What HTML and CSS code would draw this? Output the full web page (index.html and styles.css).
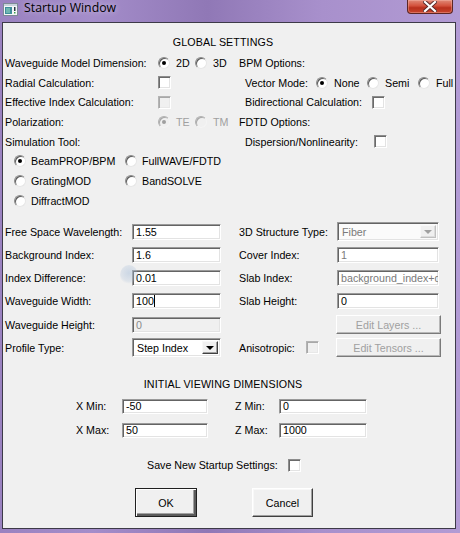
FILE: index.html
```html
<!DOCTYPE html>
<html>
<head>
<meta charset="utf-8">
<title>Startup Window</title>
<link rel="stylesheet" href="styles.css">
</head>
<body>
<div class="window">
  <div class="titlebar">
    <svg class="app-icon" width="15" height="13" viewBox="0 0 15 13">
      <rect x="0.5" y="0.5" width="14" height="12" fill="#f4f6f8" stroke="#7d8a96"/>
      <rect x="1" y="1" width="13" height="2" fill="#c9d3dc"/>
      <rect x="2" y="4" width="7" height="7" fill="#3f8f9c"/>
      <rect x="3" y="5" width="4" height="5" fill="#6fb6b0"/>
      <rect x="11" y="4" width="1.5" height="4" fill="#2c3a44"/>
      <rect x="11" y="9" width="1.5" height="1.5" fill="#3aa04a"/>
    </svg>
    <span class="title">Startup Window</span>
    <div class="close">
      <svg width="14" height="11" viewBox="0 0 14 11">
        <path d="M2 1 L12 10 M12 1 L2 10" stroke="#5a2a2a" stroke-width="4" stroke-linecap="square"/>
        <path d="M2 1 L12 10 M12 1 L2 10" stroke="#ffffff" stroke-width="2.2" stroke-linecap="square"/>
      </svg>
    </div>
  </div>

  <div class="client">
    <div class="heading">GLOBAL SETTINGS</div>

    <div class="global">
      <div class="gleft">
        <div class="row"><span class="lbl w153">Waveguide Model Dimension:</span><span class="opt w37"><i class="radio on"></i>2D</span><span class="opt"><i class="radio"></i>3D</span></div>
        <div class="row"><span class="lbl w153">Radial Calculation:</span><i class="check"></i></div>
        <div class="row"><span class="lbl w153">Effective Index Calculation:</span><i class="check dis"></i></div>
        <div class="row"><span class="lbl w153">Polarization:</span><span class="opt w37 gray"><i class="radio on dis"></i>TE</span><span class="opt gray"><i class="radio dis"></i>TM</span></div>
        <div class="row"><span class="lbl">Simulation Tool:</span></div>
        <div class="row sim"><span class="opt w111"><i class="radio on"></i>BeamPROP/BPM</span><span class="opt"><i class="radio"></i>FullWAVE/FDTD</span></div>
        <div class="row sim"><span class="opt w111"><i class="radio"></i>GratingMOD</span><span class="opt"><i class="radio"></i>BandSOLVE</span></div>
        <div class="row sim"><span class="opt w111"><i class="radio"></i>DiffractMOD</span></div>
      </div>
      <div class="gright">
        <div class="row"><span class="lbl">BPM Options:</span></div>
        <div class="row sub"><span class="lbl w71">Vector Mode:</span><span class="opt w51"><i class="radio on"></i>None</span><span class="opt w51"><i class="radio"></i>Semi</span><span class="opt"><i class="radio"></i>Full</span></div>
        <div class="row sub"><span class="lbl w127">Bidirectional Calculation:</span><i class="check"></i></div>
        <div class="row"><span class="lbl">FDTD Options:</span></div>
        <div class="row sub"><span class="lbl w129">Dispersion/Nonlinearity:</span><i class="check"></i></div>
      </div>
    </div>

    <div class="fields">
      <span class="lbl">Free Space Wavelength:</span>
      <span class="edit">1.55</span>
      <span></span>
      <span class="lbl">3D Structure Type:</span>
      <span class="combo dis"><span class="combo-text">Fiber</span><span class="drop"><i class="arrow"></i></span></span>

      <span class="lbl">Background Index:</span>
      <span class="edit">1.6</span>
      <span></span>
      <span class="lbl">Cover Index:</span>
      <span class="edit ro">1</span>

      <span class="lbl">Index Difference:</span>
      <span class="edit">0.01</span>
      <span></span>
      <span class="lbl">Slab Index:</span>
      <span class="edit ro">background_index+delta</span>

      <span class="lbl">Waveguide Width:</span>
      <span class="edit">100<i class="caret"></i></span>
      <span></span>
      <span class="lbl">Slab Height:</span>
      <span class="edit">0</span>

      <span class="lbl">Waveguide Height:</span>
      <span class="edit dis">0</span>
      <span></span>
      <span></span>
      <span class="btn small dis">Edit Layers ...</span>

      <span class="lbl">Profile Type:</span>
      <span class="combo"><span class="combo-text">Step Index</span><span class="drop"><i class="arrow"></i></span></span>
      <span></span>
      <span class="aniso"><span class="lbl w67">Anisotropic:</span><i class="check dis"></i></span>
      <span class="btn small dis">Edit Tensors ...</span>
    </div>

    <div class="heading heading2">INITIAL VIEWING DIMENSIONS</div>

    <div class="dims">
      <span class="lbl">X Min:</span>
      <span class="edit">-50</span>
      <span></span>
      <span class="lbl">Z Min:</span>
      <span class="edit">0</span>

      <span class="lbl">X Max:</span>
      <span class="edit">50</span>
      <span></span>
      <span class="lbl">Z Max:</span>
      <span class="edit">1000</span>
    </div>

    <div class="save"><span class="lbl">Save New Startup Settings:</span><i class="check"></i></div>

    <div class="buttons">
      <span class="btn big default">OK</span>
      <span class="btn big">Cancel</span>
    </div>

    <div class="watermark"></div>
  </div>
</div>
</body>
</html>
```

FILE: styles.css
```css
* { box-sizing: border-box; }

html, body {
  margin: 0;
  padding: 0;
}

body {
  width: 460px;
  height: 533px;
  overflow: hidden;
  background: #9c86c2;
}

.window {
  width: 460px;
  height: 533px;
  padding: 0 4px 4px 2px;
  background:
    linear-gradient(90deg, #9a82c0 0%, #a48dca 20%, #9078b6 45%, #a890cc 70%, #b29bd4 100%);
  font-family: "Liberation Sans", Arial, sans-serif;
  font-size: 10.7px;
  color: #000;
}

/* ---------- title bar ---------- */
.titlebar {
  height: 22px;
  display: flex;
  align-items: flex-start;
  position: relative;
}

.app-icon {
  margin: 3px 0 0 1px;
  flex: none;
}

.title {
  font-family: "Open Sans", "Noto Sans", sans-serif;
  font-size: 12.3px;
  line-height: 16px;
  margin: 0 0 0 6px;
  padding-top: 0;
  color: #000;
  text-shadow: 0 0 6px rgba(255, 255, 255, 0.55);
}

.close {
  margin-left: auto;
  margin-right: 3px;
  width: 46px;
  height: 14px;
  border: 1px solid #5c2624;
  border-top: none;
  border-radius: 0 0 4px 4px;
  background: linear-gradient(180deg, #e08a78 0%, #d3513c 45%, #b8301d 60%, #c8452c 100%);
  box-shadow: inset 0 0 0 1px rgba(255, 200, 190, 0.35);
  display: flex;
  align-items: center;
  justify-content: center;
}

.close svg { display: block; margin-top: -1px; }

/* ---------- client area ---------- */
.client {
  position: relative;
  height: 507px;
  background: #f0f0f0;
  border: 1px solid #3d3a48;
  overflow: hidden;
}

.heading {
  margin-top: 10px;
  height: 18px;
  line-height: 18px;
  text-align: center;
  padding-right: 12px;
  letter-spacing: 0.1px;
}

.heading2 {
  margin-top: 16px;
}

.lbl { white-space: nowrap; flex: none; }
.w153 { width: 153px; }
.w127 { width: 127px; }
.w129 { width: 129px; }
.w71 { width: 71px; }
.w67 { width: 67px; }

.gray { color: #a0a0a0; }

/* ---------- global settings ---------- */
.global {
  margin-top: 2px;
  display: grid;
  grid-template-columns: 236px 1fr;
}

.row {
  height: 19.7px;
  display: flex;
  align-items: center;
}

.gleft .row { padding-left: 2px; }
.gleft .row.sim { padding-left: 11px; }
.gright .row.sub { padding-left: 6px; }

.opt {
  display: flex;
  align-items: center;
  flex: none;
  white-space: nowrap;
}
.w37 { width: 37px; }
.w51 { width: 51px; }
.w111 { width: 111px; }

.sim .radio { margin-right: 5px; }

/* radio */
.radio {
  display: inline-block;
  flex: none;
  position: relative;
  width: 12px;
  height: 12px;
  margin-right: 6px;
  border-radius: 50%;
  background: #fff;
  border: 1px solid;
  border-color: #8a8a8a #e6e6e6 #e6e6e6 #8a8a8a;
  box-shadow: inset 1px 1px 0 #5a5a5a;
}
.radio.on::after {
  content: "";
  position: absolute;
  left: 3px;
  top: 3px;
  width: 4px;
  height: 4px;
  border-radius: 50%;
  background: #000;
}
.radio.dis {
  background: #f0f0f0;
  border-color: #b0b0b0 #f4f4f4 #f4f4f4 #b0b0b0;
  box-shadow: inset 1px 1px 0 #a8a8a8;
}
.radio.dis.on::after { background: #a0a0a0; }

/* checkbox */
.check {
  display: inline-block;
  flex: none;
  width: 13px;
  height: 13px;
  background: #fff;
  border: 1px solid;
  border-color: #8c8c8c #ffffff #ffffff #8c8c8c;
  box-shadow: inset 1px 1px 0 #6a6a6a, inset -1px -1px 0 #e3e3e3;
}
.check.dis {
  background: #f0f0f0;
  border-color: #b4b4b4 #ffffff #ffffff #b4b4b4;
  box-shadow: inset 1px 1px 0 #a8a8a8, inset -1px -1px 0 #e8e8e8;
}

/* ---------- edits / combos / buttons ---------- */
.edit {
  display: flex;
  align-items: center;
  height: 16px;
  padding: 0 3px;
  background: #fff;
  border: 1px solid;
  border-color: #9a9a9a #ffffff #ffffff #9a9a9a;
  box-shadow: inset 1px 1px 0 #646464, inset -1px -1px 0 #e3e3e3;
  white-space: nowrap;
  overflow: hidden;
}
.edit.dis {
  background: #f0f0f0;
  color: #8a8a8a;
}
.edit.ro {
  color: #7a7a7a;
}

.caret {
  display: inline-block;
  width: 1px;
  height: 12px;
  background: #000;
  margin-left: 0;
}

.combo {
  display: flex;
  align-items: stretch;
  height: 19px;
  background: #fff;
  border: 1px solid;
  border-color: #9a9a9a #ffffff #ffffff #9a9a9a;
  box-shadow: inset 1px 1px 0 #646464, inset -1px -1px 0 #e3e3e3;
  padding: 2px 2px 2px 2px;
}
.combo-text {
  flex: 1;
  display: flex;
  align-items: center;
  padding-left: 2px;
  white-space: nowrap;
}
.combo.dis .combo-text { color: #7a7a7a; }
.combo.dis { background: #fbfbfb; }

.drop {
  width: 16px;
  flex: none;
  background: #f0f0f0;
  border: 1px solid;
  border-color: #f8f8f8 #404040 #404040 #f8f8f8;
  box-shadow: inset -1px -1px 0 #a0a0a0;
  display: flex;
  align-items: center;
  justify-content: center;
}
.arrow {
  width: 0;
  height: 0;
  border-left: 4px solid transparent;
  border-right: 4px solid transparent;
  border-top: 4px solid #000;
  margin-top: 1px;
}
.combo.dis .drop {
  border-color: #f8f8f8 #c0c0c0 #c0c0c0 #f8f8f8;
  box-shadow: inset -1px -1px 0 #dcdcdc;
}
.combo.dis .arrow { border-top-color: #a0a0a0; }

.btn {
  display: flex;
  align-items: center;
  justify-content: center;
  background: #f0f0f0;
  border: 1px solid;
  border-color: #ffffff #404040 #404040 #ffffff;
  box-shadow: inset -1px -1px 0 #a0a0a0, inset 1px 1px 0 #f8f8f8;
  white-space: nowrap;
}
.btn.dis {
  color: #a0a0a0;
  border-color: #ffffff #7a7a7a #7a7a7a #ffffff;
  box-shadow: inset -1px -1px 0 #b8b8b8;
}
.btn.small {
  height: 19px;
  width: 105px;
  margin-left: -1px;
}
.btn.big {
  height: 29px;
  width: 62px;
}
.btn.default {
  border: 1px solid #202020;
  box-shadow: inset 1px 1px 0 #ffffff, inset -2px -2px 0 #5a5a5a, inset -3px -3px 0 #a0a0a0;
}

/* ---------- fields grid ---------- */
.fields {
  margin-top: 9.8px;
  display: grid;
  grid-template-columns: 129px 89px 18px 98px 102px;
  grid-auto-rows: 23.2px;
  align-items: center;
}
.fields > .lbl { padding-left: 2px; }
.fields > .lbl:nth-child(5n+4) { padding-left: 0; }

.aniso {
  display: flex;
  align-items: center;
}

/* ---------- viewing dims ---------- */
.dims {
  margin-top: 1px;
  padding-left: 73px;
  display: grid;
  grid-template-columns: 46px 86px 27px 44px 88px;
  grid-auto-rows: 24px;
  align-items: center;
}
.dims .edit { height: 15px; }

.save {
  margin-top: 14px;
  height: 18px;
  padding-left: 144px;
  display: flex;
  align-items: center;
}
.save .lbl { width: 141px; }

.buttons {
  margin-top: 14px;
  padding-left: 132px;
  display: flex;
  gap: 55px;
}
.buttons .btn.big:last-child { width: 61px; }

/* translucent overlay icon on the dialog */
.watermark {
  position: absolute;
  left: 117px;
  top: 242px;
  width: 18px;
  height: 20px;
  border-radius: 50%;
  background: radial-gradient(circle at 50% 40%, rgba(160, 185, 215, 0.45) 0%, rgba(170, 190, 215, 0.25) 55%, rgba(200, 210, 225, 0) 72%);
  pointer-events: none;
}
```
